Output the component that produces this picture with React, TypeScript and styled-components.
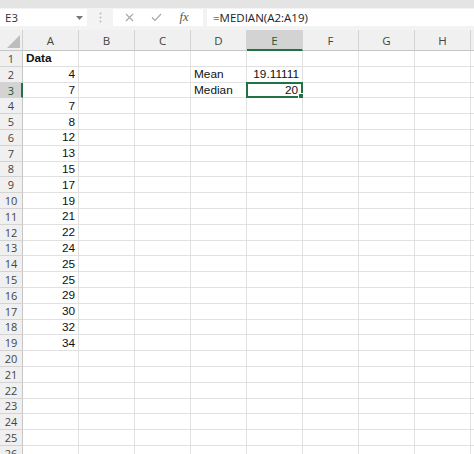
import React from "react";
import styled, { createGlobalStyle, css } from "styled-components";

const Global = createGlobalStyle`
  html, body { margin: 0; padding: 0; background: #ffffff; overflow: hidden; }
  body { width: 474px; height: 454px; }
`;

const GREEN = "#217346";
const ROW_H = 15.8;

const Page = styled.div`
  width: 474px;
  height: 454px;
  overflow: hidden;
  display: flex;
  flex-direction: column;
  background: #fff;
`;

const Toolbar = styled.div`
  height: 30px;
  flex: none;
  box-sizing: border-box;
  background: #f3f3f3;
  border-top: 8px solid #e4e4e4;
  padding-top: 1px;
  display: flex;
  align-items: flex-start;
  font-family: "Open Sans", "Noto Sans", sans-serif;
`;

const NameBox = styled.div`
  width: 87px;
  height: 17px;
  background: #fff;
  display: flex;
  align-items: center;
  justify-content: space-between;
  padding: 0 4px 0 5px;
  box-sizing: border-box;
  font-size: 11.5px;
  color: #333;
`;

const Dots = styled.div`
  width: 26px;
  height: 17px;
  display: flex;
  align-items: center;
  justify-content: center;
`;

const ButtonBox = styled.div`
  width: 90px;
  height: 17px;
  background: #fff;
  display: flex;
  align-items: center;
  justify-content: space-around;
  padding: 0 6px 0 4px;
  box-sizing: border-box;
`;

const Fx = styled.span`
  font-family: "Liberation Serif", serif;
  font-style: italic;
  font-size: 12.5px;
  color: #555;
  line-height: 1;
`;

const FormulaInput = styled.div`
  flex: 1;
  margin-left: 4px;
  height: 17px;
  background: #fff;
  display: flex;
  align-items: center;
  padding-left: 6px;
  font-size: 11.5px;
  color: #222;
`;

const Sheet = styled.div`
  display: grid;
  grid-template-columns: 23px repeat(8, 56px) 56px;
  grid-template-rows: 21px;
  grid-auto-rows: ${ROW_H}px;
  font-family: "Liberation Sans", Arial, sans-serif;
`;

const Corner = styled.div`
  background: #f0f0f0;
  border-right: 1px solid #d0d0d0;
  border-bottom: 1px solid #c6c6c6;
  box-sizing: border-box;
  display: flex;
  align-items: flex-end;
  justify-content: flex-end;
  padding: 0 2px 2px 0;
`;

const ColHeader = styled.div<{ $active?: boolean }>`
  box-sizing: border-box;
  background: ${(p) => (p.$active ? "#d3d3d3" : "#f0f0f0")};
  border-right: 1px solid #d4d4d4;
  border-bottom: ${(p) => (p.$active ? `2px solid ${GREEN}` : "1px solid #c6c6c6")};
  display: flex;
  align-items: center;
  justify-content: center;
  font-family: "Open Sans", "Noto Sans", sans-serif;
  font-size: 11.5px;
  color: ${(p) => (p.$active ? "#1f5d3a" : "#444")};
  padding-top: ${(p) => (p.$active ? "1px" : "0")};
`;

const RowHeader = styled.div<{ $active?: boolean }>`
  box-sizing: border-box;
  background: ${(p) => (p.$active ? "#d3d3d3" : "#f0f0f0")};
  border-right: ${(p) => (p.$active ? `2px solid ${GREEN}` : "1px solid #c6c6c6")};
  border-bottom: 1px solid #d4d4d4;
  display: flex;
  align-items: center;
  justify-content: center;
  font-family: "Open Sans", "Noto Sans", sans-serif;
  font-size: 11px;
  color: ${(p) => (p.$active ? "#1f5d3a" : "#444")};
  padding-left: ${(p) => (p.$active ? "1px" : "0")};
`;

const Cell = styled.div<{ $align?: "left" | "right"; $bold?: boolean; $selected?: boolean }>`
  position: relative;
  box-sizing: border-box;
  border-right: 1px solid #e1e1e1;
  border-bottom: 1px solid #e1e1e1;
  padding: 0 3px;
  display: flex;
  align-items: center;
  justify-content: ${(p) => (p.$align === "right" ? "flex-end" : "flex-start")};
  font-size: 11.8px;
  font-weight: ${(p) => (p.$bold ? 700 : 400)};
  color: #111;
  white-space: nowrap;
  overflow: visible;
  ${(p) =>
    p.$selected &&
    css`
      padding-right: 4px;
    `}
`;

const Selection = styled.div`
  position: absolute;
  left: -1px;
  top: -1px;
  right: -1px;
  bottom: -1px;
  border: 2px solid ${GREEN};
  pointer-events: none;
`;

const FillHandle = styled.div`
  position: absolute;
  right: -3px;
  bottom: -3px;
  width: 4px;
  height: 4px;
  background: ${GREEN};
  border: 1px solid #fff;
`;

const COLS = ["A", "B", "C", "D", "E", "F", "G", "H", ""];
const dataA = [4, 7, 7, 8, 12, 13, 15, 17, 19, 21, 22, 24, 25, 25, 29, 30, 32, 34];

type CellDef = { text?: string; align?: "left" | "right"; bold?: boolean };

function cellFor(row: number, col: number): CellDef {
  if (col === 0) {
    if (row === 1) return { text: "Data", bold: true };
    if (row >= 2 && row <= 19) return { text: String(dataA[row - 2]), align: "right" };
  }
  if (col === 3) {
    if (row === 2) return { text: "Mean" };
    if (row === 3) return { text: "Median" };
  }
  if (col === 4) {
    if (row === 2) return { text: "19.11111", align: "right" };
    if (row === 3) return { text: "20", align: "right" };
  }
  return {};
}

const Caret = () => (
  <svg width="7" height="4" viewBox="0 0 7 4">
    <polygon points="0,0 7,0 3.5,4" fill="#777" />
  </svg>
);

export default function App() {
  const rows = Array.from({ length: 27 }, (_, i) => i + 1);
  return (
    <Page>
      <Global />
      <Toolbar>
        <NameBox>
          <span>E3</span>
          <Caret />
        </NameBox>
        <Dots>
          <svg width="3" height="11" viewBox="0 0 3 11">
            <circle cx="1.5" cy="1.5" r="1" fill="#bdbdbd" />
            <circle cx="1.5" cy="5.5" r="1" fill="#bdbdbd" />
            <circle cx="1.5" cy="9.5" r="1" fill="#bdbdbd" />
          </svg>
        </Dots>
        <ButtonBox>
          <svg width="9" height="9" viewBox="0 0 9 9">
            <path d="M1 1 L8 8 M8 1 L1 8" stroke="#a8a8a8" strokeWidth="1.1" />
          </svg>
          <svg width="11" height="9" viewBox="0 0 11 9">
            <path d="M1 4.5 L4 7.5 L10 1" stroke="#a8a8a8" strokeWidth="1.2" fill="none" />
          </svg>
          <Fx>fx</Fx>
        </ButtonBox>
        <FormulaInput>=MEDIAN(A2:A19)</FormulaInput>
      </Toolbar>
      <Sheet>
        <Corner>
          <svg width="13" height="13" viewBox="0 0 13 13">
            <polygon points="13,0 13,13 0,13" fill="#bdbdbd" />
          </svg>
        </Corner>
        {COLS.map((c, i) => (
          <ColHeader key={"h" + i} $active={c === "E"}>
            {c}
          </ColHeader>
        ))}
        {rows.map((r) => (
          <React.Fragment key={r}>
            <RowHeader $active={r === 3}>{r}</RowHeader>
            {COLS.map((_, ci) => {
              const d = cellFor(r, ci);
              const selected = r === 3 && ci === 4;
              return (
                <Cell key={ci} $align={d.align} $bold={d.bold} $selected={selected}>
                  {d.text}
                  {selected && (
                    <Selection>
                      <FillHandle />
                    </Selection>
                  )}
                </Cell>
              );
            })}
          </React.Fragment>
        ))}
      </Sheet>
    </Page>
  );
}
